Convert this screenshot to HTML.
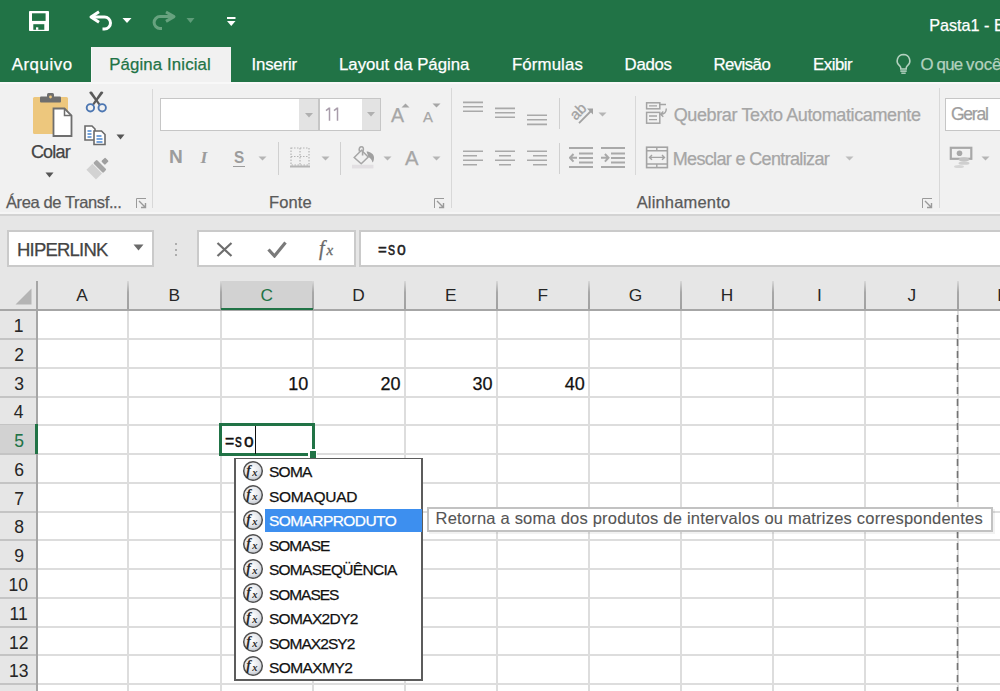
<!DOCTYPE html><html><head><meta charset="utf-8"><style>html,body{margin:0;padding:0;width:1000px;height:691px;overflow:hidden;background:#fff;position:relative;font-family:"Liberation Sans",sans-serif;}</style></head><body><div style="position:absolute;left:0px;top:0px;width:1000px;height:82px;background:#217346;"></div><div style="position:absolute;left:90.5px;top:47px;width:140px;height:36px;background:#F1F1F1;"></div><div style="position:absolute;left:90.5px;top:47px;width:1.5px;height:35px;background:#F9F9F9;"></div><div style="position:absolute;left:929.20px;top:15.68px;font-size:16.2px;line-height:18.61px;color:#FFFFFF;white-space:pre;-webkit-text-stroke:0.25px #FFFFFF;">Pasta1</div><div style="position:absolute;left:984.00px;top:15.68px;font-size:16.2px;line-height:18.61px;color:#FFFFFF;white-space:pre;-webkit-text-stroke:0.25px #FFFFFF;">- Excel</div><svg style="position:absolute;left:29px;top:11px" width="20" height="20" viewBox="0 0 20 20"><rect x="0" y="0" width="20" height="20" rx="0.8" fill="#fff"/><rect x="3" y="2.3" width="13.6" height="7.6" fill="#217346"/><rect x="4.3" y="13.2" width="11" height="5.6" fill="#217346"/><rect x="7" y="16.3" width="2.3" height="2.5" fill="#fff"/></svg><svg style="position:absolute;left:88px;top:10px" width="26" height="22" viewBox="0 0 26 22"><path d="M3.5 7H16.5A6 6 0 0 1 16.5 19H14.5" fill="none" stroke="#fff" stroke-width="3"/><path d="M11 1.8L3 7L11 12.3" fill="none" stroke="#fff" stroke-width="3" stroke-linejoin="round"/></svg><svg style="position:absolute;left:122px;top:17px" width="10" height="7" viewBox="0 0 10 7"><path d="M0.5 1h9l-4.5 5z" fill="#fff"/></svg><svg style="position:absolute;left:152px;top:10px" width="26" height="22" viewBox="0 0 26 22"><path d="M21 6.6H8A5.9 5.9 0 0 0 8 18.4H10" fill="none" stroke="#67A27F" stroke-width="3"/><path d="M14 2L22 6.6L14 11.4" fill="none" stroke="#67A27F" stroke-width="3" stroke-linejoin="round"/></svg><svg style="position:absolute;left:186px;top:17px" width="9" height="7" viewBox="0 0 9 7"><path d="M0.5 1h8l-4 5z" fill="#5E9C79"/></svg><svg style="position:absolute;left:227px;top:16px" width="9" height="11" viewBox="0 0 9 11"><rect x="0" y="1" width="8.5" height="2" fill="#fff"/><path d="M0 5h8.5l-4.25 5z" fill="#fff"/></svg><div style="position:absolute;left:11.70px;top:55.23px;font-size:16.8px;line-height:19.30px;color:#FFFFFF;white-space:pre;letter-spacing:0.572px;-webkit-text-stroke:0.25px #FFFFFF;">Arquivo</div><div style="position:absolute;left:109.20px;top:55.23px;font-size:16.8px;line-height:19.30px;color:#217346;white-space:pre;letter-spacing:0.131px;-webkit-text-stroke:0.25px #217346;">Página Inicial</div><div style="position:absolute;left:251.50px;top:55.23px;font-size:16.8px;line-height:19.30px;color:#FFFFFF;white-space:pre;letter-spacing:-0.173px;-webkit-text-stroke:0.25px #FFFFFF;">Inserir</div><div style="position:absolute;left:339.00px;top:55.23px;font-size:16.8px;line-height:19.30px;color:#FFFFFF;white-space:pre;letter-spacing:-0.020px;-webkit-text-stroke:0.25px #FFFFFF;">Layout da Página</div><div style="position:absolute;left:512.00px;top:55.23px;font-size:16.8px;line-height:19.30px;color:#FFFFFF;white-space:pre;letter-spacing:0.122px;-webkit-text-stroke:0.25px #FFFFFF;">Fórmulas</div><div style="position:absolute;left:624.60px;top:55.23px;font-size:16.8px;line-height:19.30px;color:#FFFFFF;white-space:pre;letter-spacing:-0.279px;-webkit-text-stroke:0.25px #FFFFFF;">Dados</div><div style="position:absolute;left:713.40px;top:55.23px;font-size:16.8px;line-height:19.30px;color:#FFFFFF;white-space:pre;letter-spacing:-0.549px;-webkit-text-stroke:0.25px #FFFFFF;">Revisão</div><div style="position:absolute;left:813.00px;top:55.23px;font-size:16.8px;line-height:19.30px;color:#FFFFFF;white-space:pre;letter-spacing:-0.475px;-webkit-text-stroke:0.25px #FFFFFF;">Exibir</div><svg style="position:absolute;left:895px;top:53px" width="17" height="21" viewBox="0 0 17 21"><path d="M8.5 1.5a6.3 6.3 0 0 0-3.8 11.3c0.8 0.7 1.1 1.5 1.1 2.5v0.7h5.4v-0.7c0-1 0.3-1.8 1.1-2.5A6.3 6.3 0 0 0 8.5 1.5z" fill="none" stroke="#B3D1BF" stroke-width="1.6"/><rect x="5.3" y="17.3" width="6.4" height="1.6" fill="#B3D1BF"/><rect x="6.3" y="19.5" width="4.4" height="1.4" fill="#B3D1BF"/></svg><div style="position:absolute;left:920.40px;top:55.23px;font-size:16.8px;line-height:19.30px;color:#B3D1BF;white-space:pre;letter-spacing:-0.770px;-webkit-text-stroke:0.25px #B3D1BF;">O que</div><div style="position:absolute;left:966.00px;top:55.23px;font-size:16.8px;line-height:19.30px;color:#B3D1BF;white-space:pre;-webkit-text-stroke:0.25px #B3D1BF;">você deseja</div><div style="position:absolute;left:0px;top:82px;width:1000px;height:132px;background:#F1F1F1;"></div><div style="position:absolute;left:0px;top:82px;width:1000px;height:1.5px;background:#F8F8F8;"></div><div style="position:absolute;left:0px;top:212px;width:1000px;height:2px;background:#F6F6F6;"></div><div style="position:absolute;left:0px;top:214px;width:1000px;height:2px;background:#D3D3D3;"></div><div style="position:absolute;left:152px;top:89px;width:1px;height:119px;background:#D8D8D8;"></div><div style="position:absolute;left:451px;top:88px;width:1px;height:120px;background:#D8D8D8;"></div><div style="position:absolute;left:939px;top:88px;width:1px;height:120px;background:#D8D8D8;"></div><div style="position:absolute;left:6.00px;top:193.00px;font-size:16.5px;line-height:18.96px;color:#5A5A5A;white-space:pre;letter-spacing:-0.381px;-webkit-text-stroke:0.25px #5A5A5A;">Área de Transf...</div><div style="position:absolute;left:269.00px;top:193.00px;font-size:16.5px;line-height:18.96px;color:#5A5A5A;white-space:pre;letter-spacing:0.096px;-webkit-text-stroke:0.25px #5A5A5A;">Fonte</div><div style="position:absolute;left:636.70px;top:193.00px;font-size:16.5px;line-height:18.96px;color:#5A5A5A;white-space:pre;letter-spacing:0.165px;-webkit-text-stroke:0.25px #5A5A5A;">Alinhamento</div><svg style="position:absolute;left:136px;top:198px" width="11" height="11" viewBox="0 0 11 11"><path d="M0.5 10V0.5H10" fill="none" stroke="#9A9A9A" stroke-width="1"/><path d="M3 3L9.5 9.5M5 9.5h4.5V5" fill="none" stroke="#9A9A9A" stroke-width="1.4"/></svg><svg style="position:absolute;left:434px;top:198px" width="11" height="11" viewBox="0 0 11 11"><path d="M0.5 10V0.5H10" fill="none" stroke="#9A9A9A" stroke-width="1"/><path d="M3 3L9.5 9.5M5 9.5h4.5V5" fill="none" stroke="#9A9A9A" stroke-width="1.4"/></svg><svg style="position:absolute;left:922px;top:198px" width="11" height="11" viewBox="0 0 11 11"><path d="M0.5 10V0.5H10" fill="none" stroke="#9A9A9A" stroke-width="1"/><path d="M3 3L9.5 9.5M5 9.5h4.5V5" fill="none" stroke="#9A9A9A" stroke-width="1.4"/></svg><svg style="position:absolute;left:32px;top:92px" width="44" height="46" viewBox="0 0 44 46">
<rect x="1" y="5" width="35" height="37" rx="1.5" fill="#EDC77D"/>
<rect x="8" y="4.5" width="21" height="6" rx="1" fill="#6E6E6E"/>
<rect x="15" y="1" width="7" height="6" rx="1.5" fill="#6E6E6E"/>
<circle cx="18.5" cy="5" r="1.4" fill="#EDC77D"/>
<path d="M21.5 16.5h11l7 7v20.5h-18z" fill="#FFFFFF" stroke="#6E6E6E" stroke-width="1.8"/>
<path d="M32.5 16.5v7h7" fill="none" stroke="#6E6E6E" stroke-width="1.5"/>
</svg><div style="position:absolute;left:30.90px;top:141.62px;font-size:18px;line-height:20.68px;color:#444444;white-space:pre;letter-spacing:-0.805px;-webkit-text-stroke:0.25px #444444;">Colar</div><svg style="position:absolute;left:45px;top:172px" width="9" height="6" viewBox="0 0 9 6"><path d="M0.5 0.5h8l-4 5z" fill="#555"/></svg><svg style="position:absolute;left:85px;top:90px" width="23" height="23" viewBox="0 0 23 23">
<path d="M4.2 2.8Q5.2 0.8 7 1.8L15.3 14L13.7 15.2z" fill="#5A5A5A"/><path d="M18.4 2.8Q17.4 0.8 15.6 1.8L7.3 14L8.9 15.2z" fill="#5A5A5A"/>
<circle cx="5.4" cy="17.8" r="3.7" fill="none" stroke="#4D77B2" stroke-width="1.9"/>
<circle cx="17.2" cy="17.8" r="3.7" fill="none" stroke="#4D77B2" stroke-width="1.9"/>
</svg><svg style="position:absolute;left:84px;top:125px" width="24" height="21" viewBox="0 0 24 21">
<path d="M1 1h7l3 3v11H1z" fill="#fff" stroke="#6A6A6A" stroke-width="1.6"/>
<path d="M3.5 6h4M3.5 9h4M3.5 12h4" stroke="#4A86D0" stroke-width="1.3"/>
<path d="M10 6h7.5l3.5 3.5V19.5H10z" fill="#fff" stroke="#6A6A6A" stroke-width="1.6"/>
<path d="M12.5 11h5M12.5 14h6M12.5 17h6" stroke="#4A86D0" stroke-width="1.3"/>
</svg><svg style="position:absolute;left:116px;top:134px" width="9" height="6" viewBox="0 0 9 6"><path d="M0.5 0.5h8l-4 5z" fill="#555"/></svg><svg style="position:absolute;left:84px;top:154px" width="26" height="26" viewBox="0 0 26 26"><g transform="translate(14.8 13.4) rotate(-45)"><rect x="6" y="-2.6" width="5.5" height="5.2" rx="1" fill="#9E9E9E"/><rect x="-1" y="-7" width="5" height="14" rx="1.2" fill="#A6A6A6"/><path d="M-2 -7H-10.5V6.5H-2z" fill="#D2D2D2"/></g></svg><div style="position:absolute;left:160px;top:98px;width:159px;height:33px;background:#FFFFFF;box-sizing:border-box;border:1px solid #C6C6C6;"></div><div style="position:absolute;left:299px;top:99px;width:19px;height:31px;background:#E3E3E3;"></div><svg style="position:absolute;left:305px;top:113px" width="8" height="5" viewBox="0 0 8 5"><path d="M0 0h8l-4 4.5z" fill="#B0B0B0"/></svg><div style="position:absolute;left:319px;top:98px;width:62px;height:33px;background:#FFFFFF;box-sizing:border-box;border:1px solid #C6C6C6;"></div><div style="position:absolute;left:362px;top:99px;width:18px;height:31px;background:#E3E3E3;"></div><svg style="position:absolute;left:367px;top:112px" width="8" height="5" viewBox="0 0 8 5"><path d="M0 0h8l-4 4.5z" fill="#B0B0B0"/></svg><svg style="position:absolute;left:324px;top:106px" width="18" height="16" viewBox="0 0 18 16"><path d="M5.5 1.5V14.8M5.5 1.8L2 4.6M13.5 1.5V14.8M13.5 1.8L10 4.6" fill="none" stroke="#A89CAA" stroke-width="1.5"/></svg><div style="position:absolute;left:390.70px;top:104.29px;font-size:19.5px;line-height:22.41px;color:#A6A6A6;white-space:pre;transform:scaleX(1.004);transform-origin:0.00px 0;-webkit-text-stroke:0.25px #A6A6A6;">A</div><svg style="position:absolute;left:401px;top:103px" width="9" height="5" viewBox="0 0 9 5"><path d="M0.5 4.5l4-4 4 4z" fill="#A6A6A6"/></svg><div style="position:absolute;left:423.25px;top:107.97px;font-size:15.5px;line-height:17.81px;color:#A6A6A6;white-space:pre;transform:scaleX(0.955);transform-origin:0.00px 0;-webkit-text-stroke:0.25px #A6A6A6;">A</div><svg style="position:absolute;left:432px;top:103px" width="9" height="5" viewBox="0 0 9 5"><path d="M0.5 0.5h8l-4 4z" fill="#A6A6A6"/></svg><div style="position:absolute;left:168.60px;top:147.28px;font-size:17.5px;line-height:20.11px;color:#9C9C9C;white-space:pre;font-weight:700;transform:scaleX(1.091);transform-origin:1.00px 0;">N</div><svg style="position:absolute;left:198px;top:148px" width="18" height="18" viewBox="0 0 18 18"><text x="2.5" y="15.4" font-family="Liberation Serif" font-style="italic" font-weight="bold" font-size="17.5" fill="#9C9C9C">I</text></svg><div style="position:absolute;left:233.50px;top:147.74px;font-size:17px;line-height:19.53px;color:#9C9C9C;white-space:pre;font-weight:700;transform:scaleX(0.900);transform-origin:0.00px 0;">S</div><div style="position:absolute;left:233px;top:165.8px;width:12px;height:1.4px;background:#9C9C9C;"></div><svg style="position:absolute;left:258px;top:156px" width="9" height="5" viewBox="0 0 9 5"><path d="M0.5 0.5h8l-4 4z" fill="#B5B5B5"/></svg><div style="position:absolute;left:278px;top:142px;width:1px;height:33px;background:#D0D0D0;"></div><svg style="position:absolute;left:290px;top:147px" width="20" height="21" viewBox="0 0 20 21"><g fill="none" stroke="#B5B5B5" stroke-width="1.2" stroke-dasharray="1.5 1.5"><rect x="1" y="1" width="18" height="17"/><path d="M10 1v17M1 9.5h18"/></g><rect x="0" y="18.5" width="20" height="2" fill="#B5B5B5"/></svg><svg style="position:absolute;left:321px;top:156px" width="9" height="5" viewBox="0 0 9 5"><path d="M0.5 0.5h8l-4 4z" fill="#B5B5B5"/></svg><div style="position:absolute;left:340px;top:142px;width:1px;height:33px;background:#D0D0D0;"></div><svg style="position:absolute;left:350px;top:145px" width="26" height="26" viewBox="0 0 26 26"><path d="M4.2 12.5L11.5 5.3L18.2 12L11.2 18.8z" fill="none" stroke="#A6A6A6" stroke-width="1.5"/><path d="M9.5 6.5C8.5 3 10 1.8 11.5 1.8S14 3 13 6M12.6 5.5V10.5" fill="none" stroke="#A6A6A6" stroke-width="1.6"/><path d="M16.5 6.5C20 6.5 24 9 24 12.5C24 15 23.5 16.5 22.5 17.5C22 15 20.5 13 18.5 12z" fill="#A0A0A0"/><rect x="2" y="19.8" width="21.4" height="3.6" fill="#E2DFE2"/></svg><svg style="position:absolute;left:383px;top:156px" width="9" height="5" viewBox="0 0 9 5"><path d="M0.5 0.5h8l-4 4z" fill="#B5B5B5"/></svg><div style="position:absolute;left:405.00px;top:147.44px;font-size:19.5px;line-height:22.41px;color:#A6A6A6;white-space:pre;transform:scaleX(1.038);transform-origin:0.00px 0;-webkit-text-stroke:0.25px #A6A6A6;">A</div><svg style="position:absolute;left:432px;top:156px" width="9" height="5" viewBox="0 0 9 5"><path d="M0.5 0.5h8l-4 4z" fill="#B5B5B5"/></svg><svg style="position:absolute;left:463px;top:99px" width="20" height="16" viewBox="0 0 20 16"><path d="M0.00 3.40h20M0.00 7.80h20M0.00 12.20h20" stroke="#A9A9A9" stroke-width="1.6"/></svg><svg style="position:absolute;left:495px;top:105px" width="20" height="16" viewBox="0 0 20 16"><path d="M0.00 3.40h20M0.00 7.80h20M0.00 12.20h20" stroke="#A9A9A9" stroke-width="1.6"/></svg><svg style="position:absolute;left:527px;top:112px" width="20" height="16" viewBox="0 0 20 16"><path d="M0.00 3.20h20M0.00 7.80h20M0.00 12.40h20" stroke="#A9A9A9" stroke-width="1.6"/></svg><div style="position:absolute;left:559px;top:98px;width:1px;height:31px;background:#D0D0D0;"></div><svg style="position:absolute;left:566px;top:99px" width="30" height="28" viewBox="0 0 30 28"><g transform="translate(12 12.5) rotate(-45)"><text x="0" y="5" text-anchor="middle" font-family="Liberation Sans" font-size="15" fill="#A2A2A2" stroke="#A2A2A2" stroke-width="0.3">ab</text></g><path d="M13 24.2L25.5 11.5" fill="none" stroke="#A2A2A2" stroke-width="1.8"/><path d="M21 9.5L27 9.5L27 15.5z" fill="#A2A2A2"/></svg><svg style="position:absolute;left:598px;top:112px" width="9" height="5" viewBox="0 0 9 5"><path d="M0.5 0.5h8l-4 4z" fill="#B5B5B5"/></svg><svg style="position:absolute;left:463px;top:148px" width="20" height="21" viewBox="0 0 20 21"><path d="M0.00 3.20h20M0.00 7.80h14M0.00 12.20h20M0.00 16.80h14" stroke="#A9A9A9" stroke-width="1.6"/></svg><svg style="position:absolute;left:495px;top:148px" width="20" height="21" viewBox="0 0 20 21"><path d="M0.00 3.20h20M4.00 7.80h12M0.00 12.20h20M4.00 16.80h12" stroke="#A9A9A9" stroke-width="1.6"/></svg><svg style="position:absolute;left:527px;top:148px" width="20" height="21" viewBox="0 0 20 21"><path d="M0.00 3.20h20M6.00 7.80h14M0.00 12.20h20M6.00 16.80h14" stroke="#A9A9A9" stroke-width="1.6"/></svg><div style="position:absolute;left:559px;top:143px;width:1px;height:31px;background:#D0D0D0;"></div><svg style="position:absolute;left:569px;top:147px" width="25" height="21" viewBox="0 0 25 21"><path d="M0 1h24M10 6.5h14M10 11h14M10 15.5h14M0 20h24" stroke="#A9A9A9" stroke-width="1.8"/><path d="M1 10.8h7M4.5 7l-3.6 3.8 3.6 3.8" fill="none" stroke="#A9A9A9" stroke-width="2"/></svg><svg style="position:absolute;left:601px;top:147px" width="25" height="21" viewBox="0 0 25 21"><path d="M0 1h24M10 6.5h14M10 11h14M10 15.5h14M0 20h24" stroke="#A9A9A9" stroke-width="1.8"/><path d="M0 10.8h7M3.9 7l3.6 3.8-3.6 3.8" fill="none" stroke="#A9A9A9" stroke-width="2"/></svg><div style="position:absolute;left:635px;top:96px;width:1px;height:79px;background:#D8D8D8;"></div><svg style="position:absolute;left:645px;top:101px" width="23" height="24" viewBox="0 0 23 24"><g fill="none" stroke="#A4A4A4"><rect x="1.6" y="1.8" width="13.2" height="6" stroke-width="1.5"/><path d="M4 4.8H12M14.8 3.5H21M4 15H12M4 18.6H12" stroke-width="1.3"/><rect x="1.6" y="11.4" width="13.2" height="10.8" stroke-width="1.5"/><path d="M21.3 7.5C21.3 11 19 13.2 15.8 13.2M18.3 10.6L15.6 13.2L18.3 15.8" stroke-width="1.4"/></g></svg><div style="position:absolute;left:673.70px;top:104.72px;font-size:18px;line-height:20.68px;color:#A6A6A6;white-space:pre;letter-spacing:-0.376px;-webkit-text-stroke:0.25px #A6A6A6;">Quebrar Texto Automaticamente</div><svg style="position:absolute;left:645px;top:146px" width="24" height="23" viewBox="0 0 24 23"><g fill="none" stroke="#A4A4A4"><rect x="1.6" y="1.2" width="20.8" height="20.4" stroke-width="1.6"/><path d="M1.6 4.8H22.4M1.6 18H22.4M11.8 1.2V4.8M11.8 18V21.6" stroke-width="1.4"/><path d="M4.5 11.4H19.5M7 9L4.5 11.4L7 13.8M17 9L19.5 11.4L17 13.8" stroke-width="1.4"/></g></svg><div style="position:absolute;left:672.70px;top:149.02px;font-size:18px;line-height:20.68px;color:#A6A6A6;white-space:pre;letter-spacing:-0.648px;-webkit-text-stroke:0.25px #A6A6A6;">Mesclar e Centralizar</div><svg style="position:absolute;left:845px;top:156px" width="9" height="5" viewBox="0 0 9 5"><path d="M0.5 0.5h8l-4 4z" fill="#BDBDBD"/></svg><div style="position:absolute;left:945px;top:98px;width:60px;height:33px;background:#FFFFFF;box-sizing:border-box;border:1px solid #C6C6C6;"></div><div style="position:absolute;left:950.90px;top:104.48px;font-size:17.5px;line-height:20.11px;color:#9E9E9E;white-space:pre;letter-spacing:-1.201px;-webkit-text-stroke:0.25px #9E9E9E;">Geral</div><svg style="position:absolute;left:948px;top:145px" width="26" height="26" viewBox="0 0 26 26"><rect x="2.8" y="2.8" width="20.5" height="11" fill="none" stroke="#A8A8A8" stroke-width="2.2"/><circle cx="11.5" cy="8.3" r="2.8" fill="#A8A8A8"/><ellipse cx="16" cy="14.5" rx="5.5" ry="2.2" fill="#C4C4C4"/><ellipse cx="16" cy="18.2" rx="5.5" ry="1.6" fill="#CFCFCF"/><ellipse cx="11" cy="21.5" rx="5" ry="1.6" fill="#D6D6D6"/></svg><svg style="position:absolute;left:981px;top:156px" width="9" height="5" viewBox="0 0 9 5"><path d="M0.5 0.5h8l-4 4z" fill="#B5B5B5"/></svg><div style="position:absolute;left:0px;top:216px;width:1000px;height:66px;background:#E6E6E6;"></div><div style="position:absolute;left:7px;top:230px;width:147px;height:37px;background:#FFFFFF;box-sizing:border-box;border:2px solid #CACACA;"></div><div style="position:absolute;left:17.00px;top:238.86px;font-size:18.5px;line-height:21.26px;color:#444444;white-space:pre;letter-spacing:-0.791px;-webkit-text-stroke:0.25px #444444;">HIPERLINK</div><svg style="position:absolute;left:133px;top:244px" width="11" height="7" viewBox="0 0 11 7"><path d="M0.5 0.5h10l-5 6z" fill="#6A6A6A"/></svg><div style="position:absolute;left:174.6px;top:243px;width:2.2px;height:2.2px;background:#9A9A9A;border-radius:1px;"></div><div style="position:absolute;left:174.6px;top:248.5px;width:2.2px;height:2.2px;background:#9A9A9A;border-radius:1px;"></div><div style="position:absolute;left:174.6px;top:254px;width:2.2px;height:2.2px;background:#9A9A9A;border-radius:1px;"></div><div style="position:absolute;left:197px;top:230px;width:159px;height:37px;background:#FFFFFF;box-sizing:border-box;border:2px solid #CACACA;"></div><svg style="position:absolute;left:216px;top:242px" width="17" height="15" viewBox="0 0 17 15"><path d="M1.5 1l14 13M15.5 1l-14 13" stroke="#6E6E6E" stroke-width="2.2"/></svg><svg style="position:absolute;left:267px;top:241px" width="20" height="17" viewBox="0 0 20 17"><path d="M1.5 8.5l6 6.5L18.5 1.5" fill="none" stroke="#7A7A7A" stroke-width="3.2"/></svg><svg style="position:absolute;left:316px;top:236px" width="26" height="26" viewBox="0 0 26 26"><text x="3" y="18.5" font-family="Liberation Serif" font-style="italic" font-size="20" fill="#6A6A6A" stroke="#6A6A6A" stroke-width="0.3">f</text><text x="10.5" y="19" font-family="Liberation Serif" font-style="italic" font-size="15" fill="#6A6A6A" stroke="#6A6A6A" stroke-width="0.3">x</text></svg><div style="position:absolute;left:359px;top:230px;width:650px;height:37px;background:#FFFFFF;box-sizing:border-box;border:2px solid #CACACA;"></div><div style="position:absolute;left:377.70px;top:240.04px;font-size:17px;line-height:19.53px;color:#222222;white-space:pre;transform:scaleX(0.880);transform-origin:0.00px 0;-webkit-text-stroke:0.45px #222222;">=</div><div style="position:absolute;left:387.60px;top:239.12px;font-size:18px;line-height:20.68px;color:#222222;white-space:pre;transform:scaleX(0.789);transform-origin:0.00px 0;-webkit-text-stroke:0.45px #222222;">s</div><div style="position:absolute;left:396.90px;top:239.12px;font-size:18px;line-height:20.68px;color:#222222;white-space:pre;transform:scaleX(0.880);transform-origin:0.00px 0;-webkit-text-stroke:0.45px #222222;">o</div><div style="position:absolute;left:0px;top:282px;width:1000px;height:28px;background:#E6E6E6;"></div><div style="position:absolute;left:0px;top:310px;width:37px;height:381px;background:#E6E6E6;"></div><div style="position:absolute;left:221px;top:281px;width:92px;height:28px;background:#D2D2D2;"></div><div style="position:absolute;left:127px;top:281px;width:2px;height:28px;background:linear-gradient(#D8D8D8,#A8A8A8 40%,#A0A0A0);"></div><div style="position:absolute;left:220px;top:281px;width:2px;height:28px;background:linear-gradient(#D8D8D8,#A8A8A8 40%,#A0A0A0);"></div><div style="position:absolute;left:312px;top:281px;width:2px;height:28px;background:linear-gradient(#D8D8D8,#A8A8A8 40%,#A0A0A0);"></div><div style="position:absolute;left:404px;top:281px;width:2px;height:28px;background:linear-gradient(#D8D8D8,#A8A8A8 40%,#A0A0A0);"></div><div style="position:absolute;left:496px;top:281px;width:2px;height:28px;background:linear-gradient(#D8D8D8,#A8A8A8 40%,#A0A0A0);"></div><div style="position:absolute;left:588px;top:281px;width:2px;height:28px;background:linear-gradient(#D8D8D8,#A8A8A8 40%,#A0A0A0);"></div><div style="position:absolute;left:680px;top:281px;width:2px;height:28px;background:linear-gradient(#D8D8D8,#A8A8A8 40%,#A0A0A0);"></div><div style="position:absolute;left:772px;top:281px;width:2px;height:28px;background:linear-gradient(#D8D8D8,#A8A8A8 40%,#A0A0A0);"></div><div style="position:absolute;left:864px;top:281px;width:2px;height:28px;background:linear-gradient(#D8D8D8,#A8A8A8 40%,#A0A0A0);"></div><div style="position:absolute;left:957px;top:281px;width:2px;height:28px;background:linear-gradient(#D8D8D8,#A8A8A8 40%,#A0A0A0);"></div><div style="position:absolute;left:0px;top:309px;width:1000px;height:2px;background:#A6A6A6;"></div><div style="position:absolute;left:221px;top:308px;width:92px;height:2px;background:#217346;"></div><div style="position:absolute;left:36px;top:281px;width:2px;height:410px;background:#A6A6A6;"></div><svg style="position:absolute;left:15px;top:288px" width="17" height="17" viewBox="0 0 17 17"><path d="M16.5 0.5V16.5H0.5z" fill="#B4B4B4"/></svg><div style="position:absolute;left:76.36px;top:286.37px;font-size:17.3px;line-height:19.88px;color:#262626;white-space:pre;">A</div><div style="position:absolute;left:168.50px;top:286.37px;font-size:17.3px;line-height:19.88px;color:#262626;white-space:pre;">B</div><div style="position:absolute;left:260.62px;top:286.37px;font-size:17.3px;line-height:19.88px;color:#217346;white-space:pre;">C</div><div style="position:absolute;left:352.25px;top:286.37px;font-size:17.3px;line-height:19.88px;color:#262626;white-space:pre;">D</div><div style="position:absolute;left:444.88px;top:286.37px;font-size:17.3px;line-height:19.88px;color:#262626;white-space:pre;">E</div><div style="position:absolute;left:537.51px;top:286.37px;font-size:17.3px;line-height:19.88px;color:#262626;white-space:pre;">F</div><div style="position:absolute;left:628.64px;top:286.37px;font-size:17.3px;line-height:19.88px;color:#262626;white-space:pre;">G</div><div style="position:absolute;left:720.77px;top:286.37px;font-size:17.3px;line-height:19.88px;color:#262626;white-space:pre;">H</div><div style="position:absolute;left:816.90px;top:286.37px;font-size:17.3px;line-height:19.88px;color:#262626;white-space:pre;">I</div><div style="position:absolute;left:907.53px;top:286.37px;font-size:17.3px;line-height:19.88px;color:#262626;white-space:pre;">J</div><div style="position:absolute;left:997.16px;top:286.37px;font-size:17.3px;line-height:19.88px;color:#262626;white-space:pre;">K</div><div style="position:absolute;left:38px;top:338px;width:962px;height:2px;background:#DDDDDD;"></div><div style="position:absolute;left:0px;top:338px;width:36px;height:2px;background:#C4C4C4;"></div><div style="position:absolute;left:38px;top:367px;width:962px;height:2px;background:#DDDDDD;"></div><div style="position:absolute;left:0px;top:367px;width:36px;height:2px;background:#C4C4C4;"></div><div style="position:absolute;left:38px;top:396px;width:962px;height:2px;background:#DDDDDD;"></div><div style="position:absolute;left:0px;top:396px;width:36px;height:2px;background:#C4C4C4;"></div><div style="position:absolute;left:38px;top:424px;width:962px;height:2px;background:#DDDDDD;"></div><div style="position:absolute;left:0px;top:424px;width:36px;height:2px;background:#C4C4C4;"></div><div style="position:absolute;left:38px;top:453px;width:962px;height:2px;background:#DDDDDD;"></div><div style="position:absolute;left:0px;top:453px;width:36px;height:2px;background:#C4C4C4;"></div><div style="position:absolute;left:38px;top:482px;width:962px;height:2px;background:#DDDDDD;"></div><div style="position:absolute;left:0px;top:482px;width:36px;height:2px;background:#C4C4C4;"></div><div style="position:absolute;left:38px;top:511px;width:962px;height:2px;background:#DDDDDD;"></div><div style="position:absolute;left:0px;top:511px;width:36px;height:2px;background:#C4C4C4;"></div><div style="position:absolute;left:38px;top:539px;width:962px;height:2px;background:#DDDDDD;"></div><div style="position:absolute;left:0px;top:539px;width:36px;height:2px;background:#C4C4C4;"></div><div style="position:absolute;left:38px;top:568px;width:962px;height:2px;background:#DDDDDD;"></div><div style="position:absolute;left:0px;top:568px;width:36px;height:2px;background:#C4C4C4;"></div><div style="position:absolute;left:38px;top:597px;width:962px;height:2px;background:#DDDDDD;"></div><div style="position:absolute;left:0px;top:597px;width:36px;height:2px;background:#C4C4C4;"></div><div style="position:absolute;left:38px;top:626px;width:962px;height:2px;background:#DDDDDD;"></div><div style="position:absolute;left:0px;top:626px;width:36px;height:2px;background:#C4C4C4;"></div><div style="position:absolute;left:38px;top:654px;width:962px;height:2px;background:#DDDDDD;"></div><div style="position:absolute;left:0px;top:654px;width:36px;height:2px;background:#C4C4C4;"></div><div style="position:absolute;left:38px;top:683px;width:962px;height:2px;background:#DDDDDD;"></div><div style="position:absolute;left:0px;top:683px;width:36px;height:2px;background:#C4C4C4;"></div><div style="position:absolute;left:127px;top:311px;width:2px;height:380px;background:#DDDDDD;"></div><div style="position:absolute;left:220px;top:311px;width:2px;height:380px;background:#DDDDDD;"></div><div style="position:absolute;left:312px;top:311px;width:2px;height:380px;background:#DDDDDD;"></div><div style="position:absolute;left:404px;top:311px;width:2px;height:380px;background:#DDDDDD;"></div><div style="position:absolute;left:496px;top:311px;width:2px;height:380px;background:#DDDDDD;"></div><div style="position:absolute;left:588px;top:311px;width:2px;height:380px;background:#DDDDDD;"></div><div style="position:absolute;left:680px;top:311px;width:2px;height:380px;background:#DDDDDD;"></div><div style="position:absolute;left:772px;top:311px;width:2px;height:380px;background:#DDDDDD;"></div><div style="position:absolute;left:864px;top:311px;width:2px;height:380px;background:#DDDDDD;"></div><div style="position:absolute;left:957px;top:311px;width:2px;height:380px;background:#DDDDDD;"></div><svg style="position:absolute;left:956px;top:311px" width="3" height="380" viewBox="0 0 3 380"><path d="M1.5 4V380" stroke="#747474" stroke-width="1.6" stroke-dasharray="7 5"/></svg><div style="position:absolute;left:0px;top:425px;width:36px;height:28px;background:#D2D2D2;"></div><div style="position:absolute;left:35px;top:424px;width:2.5px;height:30px;background:#217346;"></div><div style="position:absolute;left:13.80px;top:316.08px;font-size:17.5px;line-height:20.11px;color:#262626;white-space:pre;-webkit-text-stroke:0.05px #262626;">1</div><div style="position:absolute;left:14.30px;top:344.85px;font-size:17.5px;line-height:20.11px;color:#262626;white-space:pre;-webkit-text-stroke:0.05px #262626;">2</div><div style="position:absolute;left:14.30px;top:373.62px;font-size:17.5px;line-height:20.11px;color:#262626;white-space:pre;-webkit-text-stroke:0.05px #262626;">3</div><div style="position:absolute;left:13.80px;top:402.39px;font-size:17.5px;line-height:20.11px;color:#262626;white-space:pre;-webkit-text-stroke:0.05px #262626;">4</div><div style="position:absolute;left:14.30px;top:431.16px;font-size:17.5px;line-height:20.11px;color:#217346;white-space:pre;-webkit-text-stroke:0.05px #217346;">5</div><div style="position:absolute;left:14.30px;top:459.93px;font-size:17.5px;line-height:20.11px;color:#262626;white-space:pre;-webkit-text-stroke:0.05px #262626;">6</div><div style="position:absolute;left:14.30px;top:488.70px;font-size:17.5px;line-height:20.11px;color:#262626;white-space:pre;-webkit-text-stroke:0.05px #262626;">7</div><div style="position:absolute;left:14.30px;top:517.47px;font-size:17.5px;line-height:20.11px;color:#262626;white-space:pre;-webkit-text-stroke:0.05px #262626;">8</div><div style="position:absolute;left:14.30px;top:546.24px;font-size:17.5px;line-height:20.11px;color:#262626;white-space:pre;-webkit-text-stroke:0.05px #262626;">9</div><div style="position:absolute;left:8.43px;top:575.01px;font-size:17.5px;line-height:20.11px;color:#262626;white-space:pre;-webkit-text-stroke:0.05px #262626;">10</div><div style="position:absolute;left:9.58px;top:603.78px;font-size:17.5px;line-height:20.11px;color:#262626;white-space:pre;-webkit-text-stroke:0.05px #262626;">11</div><div style="position:absolute;left:8.93px;top:632.55px;font-size:17.5px;line-height:20.11px;color:#262626;white-space:pre;-webkit-text-stroke:0.05px #262626;">12</div><div style="position:absolute;left:8.93px;top:661.32px;font-size:17.5px;line-height:20.11px;color:#262626;white-space:pre;-webkit-text-stroke:0.05px #262626;">13</div><div style="position:absolute;left:288.28px;top:373.52px;font-size:18px;line-height:20.68px;color:#111111;white-space:pre;-webkit-text-stroke:0.25px #111111;">10</div><div style="position:absolute;left:380.41px;top:373.52px;font-size:18px;line-height:20.68px;color:#111111;white-space:pre;-webkit-text-stroke:0.25px #111111;">20</div><div style="position:absolute;left:472.54px;top:373.52px;font-size:18px;line-height:20.68px;color:#111111;white-space:pre;-webkit-text-stroke:0.25px #111111;">30</div><div style="position:absolute;left:564.67px;top:373.52px;font-size:18px;line-height:20.68px;color:#111111;white-space:pre;-webkit-text-stroke:0.25px #111111;">40</div><div style="position:absolute;left:219px;top:423px;width:96px;height:33px;box-sizing:border-box;border:3px solid #217346;"></div><div style="position:absolute;left:308px;top:449px;width:9px;height:9px;background:#FFFFFF;"></div><div style="position:absolute;left:310px;top:451px;width:6px;height:6.5px;background:#217346;"></div><div style="position:absolute;left:225.40px;top:430.82px;font-size:18px;line-height:20.68px;color:#111111;white-space:pre;transform:scaleX(0.880);transform-origin:0.00px 0;-webkit-text-stroke:0.45px #111111;">=</div><div style="position:absolute;left:235.40px;top:430.36px;font-size:18.5px;line-height:21.26px;color:#111111;white-space:pre;transform:scaleX(0.733);transform-origin:0.00px 0;-webkit-text-stroke:0.45px #111111;">s</div><div style="position:absolute;left:244.00px;top:430.36px;font-size:18.5px;line-height:21.26px;color:#111111;white-space:pre;transform:scaleX(0.940);transform-origin:0.00px 0;-webkit-text-stroke:0.45px #111111;">o</div><div style="position:absolute;left:255px;top:426px;width:1.4px;height:28px;background:#111111;"></div><div style="position:absolute;left:234px;top:458px;width:189px;height:223px;background:#FFFFFF;box-sizing:border-box;border:2px solid #5C5C5C;border-top-width:1px;"></div><div style="position:absolute;left:265px;top:508.5px;width:157px;height:23.7px;background:#3D8FEF;"></div><svg style="position:absolute;left:242px;top:460px" width="22" height="22" viewBox="0 0 22 22"><defs><radialGradient id="g0" cx="45%" cy="40%" r="65%"><stop offset="0" stop-color="#FFFFFF"/><stop offset="0.6" stop-color="#E4E6EA"/><stop offset="1" stop-color="#B9BEC6"/></radialGradient></defs><circle cx="11" cy="11" r="9.3" fill="url(#g0)" stroke="#505050" stroke-width="1.5"/><text x="4.2" y="15.3" font-family="Liberation Serif" font-style="italic" font-weight="bold" font-size="14" fill="#2A2A2A">f</text><text x="10.3" y="16.3" font-family="Liberation Serif" font-style="italic" font-weight="bold" font-size="10.5" fill="#2A2A2A">x</text></svg><div style="position:absolute;left:268.90px;top:463.42px;font-size:15.5px;line-height:17.81px;color:#111111;white-space:pre;letter-spacing:-0.702px;-webkit-text-stroke:0.25px #111111;">SOMA</div><svg style="position:absolute;left:242px;top:484px" width="22" height="22" viewBox="0 0 22 22"><defs><radialGradient id="g1" cx="45%" cy="40%" r="65%"><stop offset="0" stop-color="#FFFFFF"/><stop offset="0.6" stop-color="#E4E6EA"/><stop offset="1" stop-color="#B9BEC6"/></radialGradient></defs><circle cx="11" cy="11" r="9.3" fill="url(#g1)" stroke="#505050" stroke-width="1.5"/><text x="4.2" y="15.3" font-family="Liberation Serif" font-style="italic" font-weight="bold" font-size="14" fill="#2A2A2A">f</text><text x="10.3" y="16.3" font-family="Liberation Serif" font-style="italic" font-weight="bold" font-size="10.5" fill="#2A2A2A">x</text></svg><div style="position:absolute;left:268.90px;top:487.88px;font-size:15.5px;line-height:17.81px;color:#111111;white-space:pre;letter-spacing:-0.276px;-webkit-text-stroke:0.25px #111111;">SOMAQUAD</div><svg style="position:absolute;left:242px;top:509px" width="22" height="22" viewBox="0 0 22 22"><defs><radialGradient id="g2" cx="45%" cy="40%" r="65%"><stop offset="0" stop-color="#FFFFFF"/><stop offset="0.6" stop-color="#E4E6EA"/><stop offset="1" stop-color="#B9BEC6"/></radialGradient></defs><circle cx="11" cy="11" r="9.3" fill="url(#g2)" stroke="#505050" stroke-width="1.5"/><text x="4.2" y="15.3" font-family="Liberation Serif" font-style="italic" font-weight="bold" font-size="14" fill="#2A2A2A">f</text><text x="10.3" y="16.3" font-family="Liberation Serif" font-style="italic" font-weight="bold" font-size="10.5" fill="#2A2A2A">x</text></svg><div style="position:absolute;left:268.90px;top:512.34px;font-size:15.5px;line-height:17.81px;color:#FFFFFF;white-space:pre;letter-spacing:-0.564px;-webkit-text-stroke:0.25px #FFFFFF;">SOMARPRODUTO</div><svg style="position:absolute;left:242px;top:533px" width="22" height="22" viewBox="0 0 22 22"><defs><radialGradient id="g3" cx="45%" cy="40%" r="65%"><stop offset="0" stop-color="#FFFFFF"/><stop offset="0.6" stop-color="#E4E6EA"/><stop offset="1" stop-color="#B9BEC6"/></radialGradient></defs><circle cx="11" cy="11" r="9.3" fill="url(#g3)" stroke="#505050" stroke-width="1.5"/><text x="4.2" y="15.3" font-family="Liberation Serif" font-style="italic" font-weight="bold" font-size="14" fill="#2A2A2A">f</text><text x="10.3" y="16.3" font-family="Liberation Serif" font-style="italic" font-weight="bold" font-size="10.5" fill="#2A2A2A">x</text></svg><div style="position:absolute;left:268.90px;top:536.80px;font-size:15.5px;line-height:17.81px;color:#111111;white-space:pre;letter-spacing:-0.977px;-webkit-text-stroke:0.25px #111111;">SOMASE</div><svg style="position:absolute;left:242px;top:558px" width="22" height="22" viewBox="0 0 22 22"><defs><radialGradient id="g4" cx="45%" cy="40%" r="65%"><stop offset="0" stop-color="#FFFFFF"/><stop offset="0.6" stop-color="#E4E6EA"/><stop offset="1" stop-color="#B9BEC6"/></radialGradient></defs><circle cx="11" cy="11" r="9.3" fill="url(#g4)" stroke="#505050" stroke-width="1.5"/><text x="4.2" y="15.3" font-family="Liberation Serif" font-style="italic" font-weight="bold" font-size="14" fill="#2A2A2A">f</text><text x="10.3" y="16.3" font-family="Liberation Serif" font-style="italic" font-weight="bold" font-size="10.5" fill="#2A2A2A">x</text></svg><div style="position:absolute;left:268.90px;top:561.26px;font-size:15.5px;line-height:17.81px;color:#111111;white-space:pre;letter-spacing:-0.709px;-webkit-text-stroke:0.25px #111111;">SOMASEQÜÊNCIA</div><svg style="position:absolute;left:242px;top:582px" width="22" height="22" viewBox="0 0 22 22"><defs><radialGradient id="g5" cx="45%" cy="40%" r="65%"><stop offset="0" stop-color="#FFFFFF"/><stop offset="0.6" stop-color="#E4E6EA"/><stop offset="1" stop-color="#B9BEC6"/></radialGradient></defs><circle cx="11" cy="11" r="9.3" fill="url(#g5)" stroke="#505050" stroke-width="1.5"/><text x="4.2" y="15.3" font-family="Liberation Serif" font-style="italic" font-weight="bold" font-size="14" fill="#2A2A2A">f</text><text x="10.3" y="16.3" font-family="Liberation Serif" font-style="italic" font-weight="bold" font-size="10.5" fill="#2A2A2A">x</text></svg><div style="position:absolute;left:268.90px;top:585.72px;font-size:15.5px;line-height:17.81px;color:#111111;white-space:pre;letter-spacing:-1.037px;-webkit-text-stroke:0.25px #111111;">SOMASES</div><svg style="position:absolute;left:242px;top:607px" width="22" height="22" viewBox="0 0 22 22"><defs><radialGradient id="g6" cx="45%" cy="40%" r="65%"><stop offset="0" stop-color="#FFFFFF"/><stop offset="0.6" stop-color="#E4E6EA"/><stop offset="1" stop-color="#B9BEC6"/></radialGradient></defs><circle cx="11" cy="11" r="9.3" fill="url(#g6)" stroke="#505050" stroke-width="1.5"/><text x="4.2" y="15.3" font-family="Liberation Serif" font-style="italic" font-weight="bold" font-size="14" fill="#2A2A2A">f</text><text x="10.3" y="16.3" font-family="Liberation Serif" font-style="italic" font-weight="bold" font-size="10.5" fill="#2A2A2A">x</text></svg><div style="position:absolute;left:268.90px;top:610.18px;font-size:15.5px;line-height:17.81px;color:#111111;white-space:pre;letter-spacing:-0.654px;-webkit-text-stroke:0.25px #111111;">SOMAX2DY2</div><svg style="position:absolute;left:242px;top:631px" width="22" height="22" viewBox="0 0 22 22"><defs><radialGradient id="g7" cx="45%" cy="40%" r="65%"><stop offset="0" stop-color="#FFFFFF"/><stop offset="0.6" stop-color="#E4E6EA"/><stop offset="1" stop-color="#B9BEC6"/></radialGradient></defs><circle cx="11" cy="11" r="9.3" fill="url(#g7)" stroke="#505050" stroke-width="1.5"/><text x="4.2" y="15.3" font-family="Liberation Serif" font-style="italic" font-weight="bold" font-size="14" fill="#2A2A2A">f</text><text x="10.3" y="16.3" font-family="Liberation Serif" font-style="italic" font-weight="bold" font-size="10.5" fill="#2A2A2A">x</text></svg><div style="position:absolute;left:268.90px;top:634.64px;font-size:15.5px;line-height:17.81px;color:#111111;white-space:pre;letter-spacing:-0.923px;-webkit-text-stroke:0.25px #111111;">SOMAX2SY2</div><svg style="position:absolute;left:242px;top:655px" width="22" height="22" viewBox="0 0 22 22"><defs><radialGradient id="g8" cx="45%" cy="40%" r="65%"><stop offset="0" stop-color="#FFFFFF"/><stop offset="0.6" stop-color="#E4E6EA"/><stop offset="1" stop-color="#B9BEC6"/></radialGradient></defs><circle cx="11" cy="11" r="9.3" fill="url(#g8)" stroke="#505050" stroke-width="1.5"/><text x="4.2" y="15.3" font-family="Liberation Serif" font-style="italic" font-weight="bold" font-size="14" fill="#2A2A2A">f</text><text x="10.3" y="16.3" font-family="Liberation Serif" font-style="italic" font-weight="bold" font-size="10.5" fill="#2A2A2A">x</text></svg><div style="position:absolute;left:268.90px;top:659.10px;font-size:15.5px;line-height:17.81px;color:#111111;white-space:pre;letter-spacing:-0.562px;-webkit-text-stroke:0.25px #111111;">SOMAXMY2</div><div style="position:absolute;left:429px;top:509px;width:566px;height:25px;background:rgba(0,0,0,0.05);"></div><div style="position:absolute;left:427px;top:507px;width:566px;height:25px;background:#FFFFFF;box-sizing:border-box;border:2px solid #C2C2C2;"></div><div style="position:absolute;left:435.50px;top:509.10px;font-size:16.5px;line-height:18.96px;color:#555555;white-space:pre;letter-spacing:0.210px;-webkit-text-stroke:0.1px #555555;">Retorna a soma dos produtos de intervalos ou matrizes correspondentes</div></body></html>
